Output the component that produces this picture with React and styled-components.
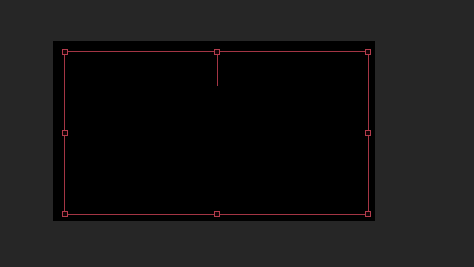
import React from 'react'
import styled, { createGlobalStyle } from 'styled-components'

const Global = createGlobalStyle`
  html, body { margin: 0; padding: 0; background: #262626; }
  body { width: 474px; height: 267px; overflow: hidden; }
`

const Workspace = styled.div`
  width: 474px;
  height: 267px;
  padding: 41px 0 0 53px;
  box-sizing: border-box;
`

const Stage = styled.div`
  width: 322px;
  height: 180px;
  background: #000;
  padding: 10px 6px 6px 11px;
  box-sizing: border-box;
  display: flex;
`

const Frame = styled.div`
  position: relative;
  flex: 1;
  border: 1px solid #a33544;
`

const Handle = styled.span`
  position: absolute;
  width: 6px;
  height: 6px;
  border: 1px solid #b33c4c;
  background: #140306;
  box-sizing: border-box;
  left: ${p => p.$x};
  top: ${p => p.$y};
  transform: translate(-50%, -50%);
  z-index: 2;
`

const RotateLine = styled.span`
  position: absolute;
  left: 50%;
  top: 0;
  width: 1px;
  height: 34px;
  background: #a33544;
`

const handles = [
  ['0%', '0%'], ['50%', '0%'], ['100%', '0%'],
  ['0%', '50%'], ['100%', '50%'],
  ['0%', '100%'], ['50%', '100%'], ['100%', '100%'],
]

const App = () => {
  return (
    <>
      <Global />
      <Workspace>
        <Stage>
          <Frame>
            <RotateLine />
            {handles.map(([x, y], i) => (
              <Handle key={i} $x={x} $y={y} />
            ))}
          </Frame>
        </Stage>
      </Workspace>
    </>
  )
}

export default App
